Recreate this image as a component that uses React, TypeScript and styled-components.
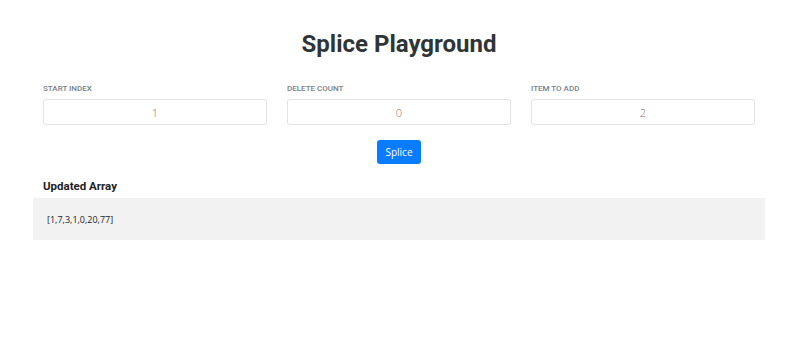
import React, { useState } from "react";
import styled, { createGlobalStyle } from "styled-components";

const Global = createGlobalStyle`
  html, body { margin: 0; padding: 0; background: #fff; }
  body { font-family: Roboto, "Liberation Sans", sans-serif; }
  * { box-sizing: border-box; }
`;

const Page = styled.div`
  width: 732px;
  margin: 0 auto;
  padding-top: 30px;
  position: relative;
  left: -1px;
`;

const Title = styled.h1`
  margin: 0;
  font-size: 24px;
  line-height: 28px;
  font-weight: 700;
  color: #2f3537;
  text-align: center;
`;

const Fields = styled.div`
  display: grid;
  grid-template-columns: repeat(3, 1fr);
  column-gap: 20px;
  padding: 0 10px;
  margin-top: 26px;
`;

const Field = styled.label`
  display: flex;
  flex-direction: column;
`;

const Label = styled.span`
  font-size: 8px;
  line-height: 10px;
  font-weight: 500;
  color: #7a7f86;
  text-transform: uppercase;
  margin-bottom: 5px;
`;

const Input = styled.input`
  height: 26px;
  width: 100%;
  border: 1px solid #e3e3e3;
  border-radius: 3px;
  text-align: center;
  font-family: "Open Sans", sans-serif;
  font-size: 11px;
  font-weight: 300;
  color: #777;
  background: #fff;
  outline: none;
`;

const Actions = styled.div`
  display: flex;
  justify-content: center;
  margin-top: 15px;
`;

const Button = styled.button`
  height: 24px;
  padding: 0 8px;
  border: none;
  border-radius: 3px;
  background: #0a7cff;
  color: #fff;
  font-family: "Open Sans", sans-serif;
  font-size: 10px;
  cursor: pointer;
`;

const Heading = styled.h2`
  margin: 15px 0 5px;
  padding-left: 10px;
  font-size: 11.5px;
  line-height: 14px;
  font-weight: 700;
  color: #222;
`;

const Result = styled.div`
  height: 42px;
  background: #f2f2f2;
  display: flex;
  align-items: center;
  padding-left: 14px;
  font-family: "Open Sans", sans-serif;
  font-size: 9px;
  color: #222;
`;

export default function App() {
  const [start, setStart] = useState("1");
  const [del, setDel] = useState("0");
  const [item, setItem] = useState("2");
  const [arr, setArr] = useState<number[]>([1, 7, 3, 1, 0, 20, 77]);

  const splice = () => {
    const next = [...arr];
    next.splice(Number(start), Number(del), Number(item));
    setArr(next);
  };

  return (
    <>
      <Global />
      <Page>
        <Title>Splice Playground</Title>
        <Fields>
          <Field>
            <Label>Start Index</Label>
            <Input value={start} onChange={(e) => setStart(e.target.value)} />
          </Field>
          <Field>
            <Label>Delete Count</Label>
            <Input value={del} onChange={(e) => setDel(e.target.value)} />
          </Field>
          <Field>
            <Label>Item To Add</Label>
            <Input value={item} onChange={(e) => setItem(e.target.value)} />
          </Field>
        </Fields>
        <Actions>
          <Button onClick={splice}>Splice</Button>
        </Actions>
        <Heading>Updated Array</Heading>
        <Result>[{arr.join(",")}]</Result>
      </Page>
    </>
  );
}
